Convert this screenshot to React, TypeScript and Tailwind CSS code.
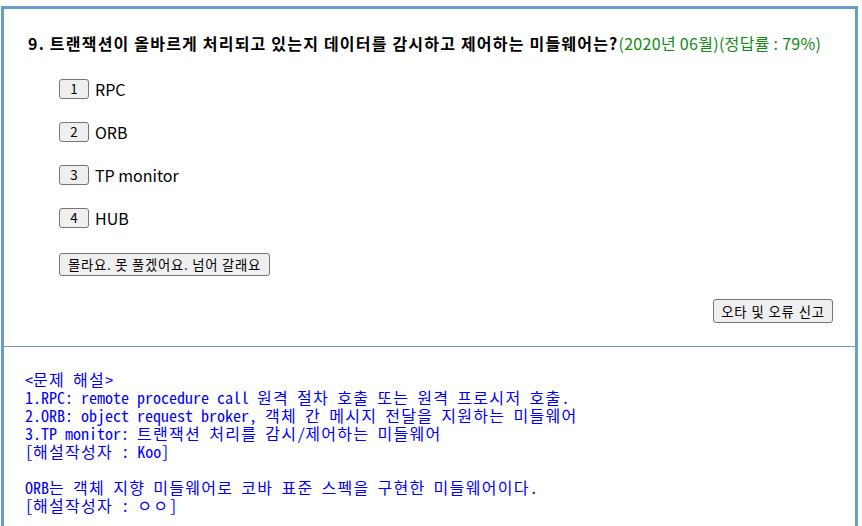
import React from 'react';

const options = ['RPC', 'ORB', 'TP monitor', 'HUB'];

const explanation = `<문제 해설>
1.RPC: remote procedure call 원격 절차 호출 또는 원격 프로시저 호출.
2.ORB: object request broker, 객체 간 메시지 전달을 지원하는 미들웨어
3.TP monitor: 트랜잭션 처리를 감시/제어하는 미들웨어
[해설작성자 : Koo]

ORB는 객체 지향 미들웨어로 코바 표준 스펙을 구현한 미들웨어이다.
[해설작성자 : ㅇㅇ]`;

// Hangul in the mono font is a bit narrower than full width, so pad it out
const renderMono = (text: string) =>
  text.split(/([\uAC00-\uD7A3\u3131-\u318E]+)/).map((part, i) =>
    /[\uAC00-\uD7A3\u3131-\u318E]/.test(part) ? (
      <span key={i} className="tracking-[1.3px]">
        {part}
      </span>
    ) : (
      part
    )
  );

const btn =
  'bg-[#efefef] border border-[#767676] rounded-[3px] text-[13.33px] text-black leading-none font-["Noto_Sans_CJK_KR",sans-serif]';

export default function App() {
  return (
    <div className="bg-white min-h-[526px] pt-[6px] font-['Noto_Sans_CJK_KR',sans-serif]">
      <div className="ml-[1px] w-[857px] border-[3px] border-[#6a9bcf] h-[560px]">
        {/* Question */}
        <div className="pl-[24px] pr-[22px] pt-[22px] pb-[23px]">
          <p className="text-[16px] leading-[24px] text-black whitespace-nowrap">
            <span className="font-bold tracking-[1.2px]">9. 트랜잭션이 올바르게 처리되고 있는지 데이터를 감시하고 제어하는 미들웨어는?</span>
            <span className="text-[#108a10] tracking-[0.3px]">(2020년 06월)(정답률 : 79%)</span>
          </p>

          <div className="mt-[24px] ml-[31px] flex flex-col gap-[23px]">
            {options.map((o, i) => (
              <div key={o} className="flex items-center h-[20px] gap-[6px]">
                <button className={`${btn} w-[30px] h-[20px]`}>{i + 1}</button>
                <span className="text-[16px] text-black">{o}</span>
              </div>
            ))}
            <div>
              <button className={`${btn} h-[23px] px-[8px] tracking-[0.75px]`}>몰라요. 못 풀겠어요. 넘어 갈래요</button>
            </div>
          </div>

          <div className="mt-[23px] flex justify-end">
            <button className={`${btn} h-[24px] px-[7px] tracking-[0.9px]`}>오타 및 오류 신고</button>
          </div>
        </div>

        <div className="h-px bg-[#6a9bcf]" />

        {/* Explanation */}
        <pre className="pl-[21px] pt-[23px] text-[16px] leading-[18px] text-[#0000ff] whitespace-pre font-['Noto_Sans_Mono_CJK_KR','Liberation_Mono',monospace]">
          {renderMono(explanation)}
        </pre>
      </div>
    </div>
  );
}
